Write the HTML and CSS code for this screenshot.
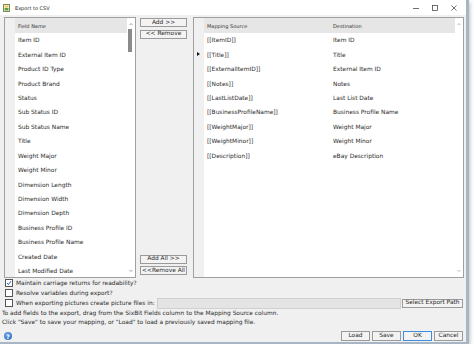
FILE: index.html
```html
<!DOCTYPE html>
<html lang="en">
<head>
    <meta charset="UTF-8">
    <title>Export to CSV</title>
    <link rel="stylesheet" href="styles.css">
</head>
<body>

<div class="window">
    <div class="titlebar">
        <svg class="app-icon" width="7" height="8" viewBox="0 0 7 8">
            <rect x="0.5" y="0.5" width="6" height="7" fill="#fff" stroke="#7a8c5a"/>
            <rect x="1.5" y="1.5" width="4" height="2" fill="#e8c840"/>
            <rect x="1.5" y="4" width="4" height="2.5" fill="#5aa03c"/>
        </svg>
        <span class="title">Export to CSV</span>
        <div class="controls">
            <svg width="8" height="8" viewBox="0 0 8 8"><line x1="1" y1="4.5" x2="7" y2="4.5" stroke="#333" stroke-width="0.7"/></svg>
            <svg width="8" height="8" viewBox="0 0 8 8"><rect x="1.5" y="1.5" width="5" height="5" fill="none" stroke="#333" stroke-width="0.7"/></svg>
            <svg width="8" height="8" viewBox="0 0 8 8"><path d="M1.5 1.5 L6.5 6.5 M6.5 1.5 L1.5 6.5" stroke="#333" stroke-width="0.7"/></svg>
        </div>
    </div>

    <div class="main">
        <div class="grid grid-left">
            <div class="grid-body">
                <div class="hrow"><div class="hcell">Field Name</div></div>
                <div class="row"><div class="cell">Item ID</div></div>
                <div class="row"><div class="cell">External Item ID</div></div>
                <div class="row"><div class="cell">Product ID Type</div></div>
                <div class="row"><div class="cell">Product Brand</div></div>
                <div class="row"><div class="cell">Status</div></div>
                <div class="row"><div class="cell">Sub Status ID</div></div>
                <div class="row"><div class="cell">Sub Status Name</div></div>
                <div class="row"><div class="cell">Title</div></div>
                <div class="row"><div class="cell">Weight Major</div></div>
                <div class="row"><div class="cell">Weight Minor</div></div>
                <div class="row"><div class="cell">Dimension Length</div></div>
                <div class="row"><div class="cell">Dimension Width</div></div>
                <div class="row"><div class="cell">Dimension Depth</div></div>
                <div class="row"><div class="cell">Business Profile ID</div></div>
                <div class="row"><div class="cell">Business Profile Name</div></div>
                <div class="row"><div class="cell">Created Date</div></div>
                <div class="row"><div class="cell">Last Modified Date</div></div>
            </div>
            <div class="scrollbar">
                <svg class="arrow" width="8" height="9" viewBox="0 0 8 9"><path d="M2.5 5 L4 3.5 L5.5 5" fill="none" stroke="#777" stroke-width="0.7"/></svg>
                <div class="track"><div class="thumb"></div></div>
                <svg class="arrow" width="8" height="9" viewBox="0 0 8 9"><path d="M2.5 4 L4 5.5 L5.5 4" fill="none" stroke="#777" stroke-width="0.7"/></svg>
            </div>
        </div>

        <div class="mid">
            <div class="btn-stack">
                <button class="btn btn-mid">Add &gt;&gt;</button>
                <button class="btn btn-mid">&lt;&lt; Remove</button>
            </div>
            <div class="btn-stack">
                <button class="btn btn-mid">Add All &gt;&gt;</button>
                <button class="btn btn-mid">&lt;&lt;Remove All</button>
            </div>
        </div>

        <div class="grid grid-right">
            <div class="grid-body">
                <div class="hrow"><div class="hcell col-src">Mapping Source</div><div class="hcell">Destination</div></div>
                <div class="row"><div class="cell col-src">[[ItemID]]</div><div class="cell">Item ID</div></div>
                <div class="row current"><div class="cell col-src">[[Title]]</div><div class="cell">Title</div></div>
                <div class="row"><div class="cell col-src">[[ExternalItemID]]</div><div class="cell">External Item ID</div></div>
                <div class="row"><div class="cell col-src">[[Notes]]</div><div class="cell">Notes</div></div>
                <div class="row"><div class="cell col-src">[[LastListDate]]</div><div class="cell">Last List Date</div></div>
                <div class="row"><div class="cell col-src">[[BusinessProfileName]]</div><div class="cell">Business Profile Name</div></div>
                <div class="row"><div class="cell col-src">[[WeightMajor]]</div><div class="cell">Weight Major</div></div>
                <div class="row"><div class="cell col-src">[[WeightMinor]]</div><div class="cell">Weight Minor</div></div>
                <div class="row"><div class="cell col-src">[[Description]]</div><div class="cell">eBay Description</div></div>
            </div>
            <div class="scrollbar">
                <svg class="arrow" width="8" height="9" viewBox="0 0 8 9"><path d="M2.5 5 L4 3.5 L5.5 5" fill="none" stroke="#999" stroke-width="0.7"/></svg>
                <div class="track"></div>
                <svg class="arrow" width="8" height="9" viewBox="0 0 8 9"><path d="M2.5 4 L4 5.5 L5.5 4" fill="none" stroke="#999" stroke-width="0.7"/></svg>
            </div>
        </div>
    </div>

    <div class="options">
        <div class="opt">
            <span class="check checked">
                <svg width="6" height="6" viewBox="0 0 6 6"><path d="M1 3 L2.4 4.6 L5 1.2" fill="none" stroke="#1f5fbf" stroke-width="1"/></svg>
            </span>
            <span class="label">Maintain carriage returns for readability?</span>
        </div>
        <div class="opt">
            <span class="check"></span>
            <span class="label">Resolve variables during export?</span>
        </div>
        <div class="opt">
            <span class="check"></span>
            <span class="label">When exporting pictures create picture files in:</span>
            <div class="path-input"></div>
            <button class="btn btn-path">Select Export Path</button>
        </div>
    </div>

    <div class="notes">
        <p>To add fields to the export, drag from the SixBit Fields column to the Mapping Source column.</p>
        <p>Click "Save" to save your mapping, or "Load" to load a previously saved mapping file.</p>
    </div>

    <div class="footer">
        <span class="help">?</span>
        <div class="actions">
            <button class="btn btn-foot">Load</button>
            <button class="btn btn-foot">Save</button>
            <button class="btn btn-foot btn-default">OK</button>
            <button class="btn btn-foot">Cancel</button>
        </div>
    </div>
</div>

</body>
</html>
```

FILE: styles.css
```css
body {
    margin: 0;
    background: #fff;
    font-family: "DejaVu Sans", Verdana, sans-serif;
    font-size: 5.9px;
    color: #2a2a2a;
}
.window {
    width: 466px;
    height: 342px;
    background: #f0f0f0;
    border-right: 3px solid #a7b5c4;
    border-bottom: 2px solid #a7b5c4;
    box-shadow: 1px 2px 4px rgba(0, 0, 0, 0.25);
    display: flex;
    flex-direction: column;
}
.titlebar {
    height: 15px;
    flex: none;
    background: #fff;
    display: flex;
    align-items: center;
    padding-left: 3px;
}
.app-icon {
    margin-right: 5px;
}
.title {
    font-size: 5px;
    color: #222;
}
.controls {
    margin-left: auto;
    display: flex;
    gap: 11px;
    padding-right: 8px;
}

/* top part: two grids with the buttons between */
.main {
    height: 261px;
    flex: none;
    display: flex;
    padding: 2px 0 0 4px;
}
.grid {
    display: flex;
    border: 1px solid #a0a0a0;
    box-shadow: inset 0 0 0 1px #e3e3e3;
    overflow: hidden;
}
.grid-left {
    width: 130px;
}
.grid-right {
    width: 269px;
}
.grid-body {
    flex: 1;
    overflow: hidden;
    background: linear-gradient(to right, #f0f0f0 10px, #fff 10px);
}
.hrow {
    height: 15px;
    margin-left: 10px;
    display: flex;
    align-items: center;
    background: #e6e6e6;
    font-size: 5px;
    color: #333;
}
.row {
    height: 14.44px;
    margin-left: 10px;
    display: flex;
    align-items: center;
    position: relative;
}
.current::before {
    content: "";
    position: absolute;
    left: -7px;
    top: 5px;
    border-left: 3px solid #111;
    border-top: 2.5px solid transparent;
    border-bottom: 2.5px solid transparent;
}
.hcell, .cell {
    padding-left: 3px;
    white-space: nowrap;
}
.col-src {
    width: 123px;
}
.scrollbar {
    width: 8px;
    display: flex;
    flex-direction: column;
    background: #fff;
}
.arrow {
    flex: none;
    margin-top: 2px;
}
.scrollbar .arrow:last-child {
    margin-top: 0;
    margin-bottom: 2px;
}
.track {
    flex: 1;
}
.thumb {
    width: 3.5px;
    height: 23px;
    margin: 0 0 0 1px;
    background: #8a8a8a;
}

.mid {
    width: 57px;
    display: flex;
    flex-direction: column;
    justify-content: space-between;
    padding: 1px 0 3px 4px;
    box-sizing: border-box;
}
.btn-stack {
    display: flex;
    flex-direction: column;
    gap: 2.5px;
}
.btn {
    font-family: inherit;
    font-size: 5.9px;
    color: #2a2a2a;
    background: #f3f3f3;
    border: 1px solid #9a9a9a;
    padding: 0;
    margin: 0;
    line-height: 1;
    white-space: nowrap;
}
.btn-mid {
    width: 47px;
    height: 9px;
}

/* check boxes */
.options {
    padding: 0 3px 0 5px;
}
.opt {
    height: 10px;
    display: flex;
    align-items: center;
}
.label {
    white-space: nowrap;
    flex: none;
}
.check {
    flex: none;
    width: 6px;
    height: 6px;
    border: 1px solid #555;
    background: #fff;
    margin-right: 3px;
    display: flex;
}
.path-input {
    flex: 1;
    height: 9px;
    margin-left: 2px;
    background: #e4e4e4;
    border: 1px solid #d0d0d0;
}
.btn-path {
    flex: none;
    width: 61px;
    height: 9px;
    margin-left: 1px;
}

.notes {
    padding: 0.5px 0 0 2px;
}
.notes p {
    margin: 0;
    line-height: 9.3px;
    white-space: nowrap;
}

.footer {
    display: flex;
    align-items: center;
    padding: 4px 0 0 4px;
}
.help {
    width: 8px;
    height: 8px;
    border-radius: 50%;
    background: radial-gradient(circle at 40% 35%, #6fa8e8, #1f5fb8);
    color: #fff;
    font-size: 6px;
    font-weight: bold;
    display: flex;
    align-items: center;
    justify-content: center;
}
.actions {
    margin-left: auto;
    display: flex;
    gap: 2px;
    padding-right: 3px;
}
.btn-foot {
    width: 29px;
    height: 10px;
}
.btn-default {
    border-color: #3c8ce0;
}
```
